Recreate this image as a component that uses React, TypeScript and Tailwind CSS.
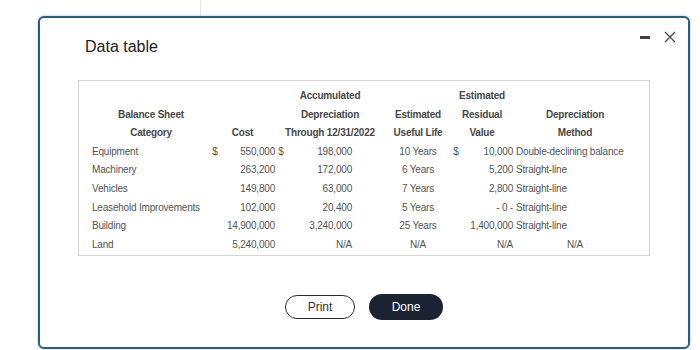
const rows = [
  { cat: "Equipment", costSign: "$", cost: "550,000", accSign: "$", acc: "198,000", life: "10 Years", resSign: "$", res: "10,000", method: "Double-declining balance" },
  { cat: "Machinery", cost: "263,200", acc: "172,000", life: "6 Years", res: "5,200", method: "Straight-line" },
  { cat: "Vehicles", cost: "149,800", acc: "63,000", life: "7 Years", res: "2,800", method: "Straight-line" },
  { cat: "Leasehold Improvements", cost: "102,000", acc: "20,400", life: "5 Years", res: "- 0 -", method: "Straight-line" },
  { cat: "Building", cost: "14,900,000", acc: "3,240,000", life: "25 Years", res: "1,400,000", method: "Straight-line" },
  { cat: "Land", cost: "5,240,000", acc: "N/A", life: "N/A", res: "N/A", method: "N/A", centerMethod: true },
]

export default function App() {
  return (
    <div className="h-[350px] w-[700px] overflow-hidden bg-white font-['Liberation_Sans',Arial,sans-serif]">
      <div className="ml-[200px] h-[16px] border-l border-[#e6e6e6]" />
      <div className="relative ml-[38px] flex h-[333px] w-[652px] flex-col rounded-[6px] border-2 border-[#2d5c7a] bg-white shadow-[0_0_3px_rgba(60,130,170,0.45)]">
        <div className="absolute right-[12px] top-[13px] flex items-center gap-[14px]">
          <div className="h-[3px] w-[10px] bg-[#404040]" />
          <svg width="12" height="12" viewBox="0 0 12 12">
            <path d="M1 1 L11 11 M11 1 L1 11" stroke="#4a4a4a" strokeWidth="1.3" />
          </svg>
        </div>

        <h1 className="ml-[45px] mt-[20px] text-[16px] leading-[18px] text-[#222]">Data table</h1>

        <div className="mx-[38px] mt-[24px] border border-[#d6d6d6] pb-[1px] pt-[6px]">
          <table className="w-[570px] table-fixed border-collapse text-[10px] leading-[18.6px] tracking-[-0.2px] text-[#555]">
            <colgroup>
              <col className="w-[131px]" />
              <col className="w-[10px]" />
              <col className="w-[55px]" />
              <col className="w-[12px]" />
              <col className="w-[98px]" />
              <col className="w-[66px]" />
              <col className="w-[10px]" />
              <col className="w-[52px]" />
              <col className="w-[136px]" />
            </colgroup>
            <thead className="font-bold text-[#484848]">
              <tr>
                <th />
                <th colSpan={2} />
                <th colSpan={2} className="text-center font-bold">Accumulated</th>
                <th />
                <th colSpan={2} className="text-center font-bold">Estimated</th>
                <th />
              </tr>
              <tr>
                <th className="pl-[13px] text-center font-bold">Balance Sheet</th>
                <th colSpan={2} />
                <th colSpan={2} className="text-center font-bold">Depreciation</th>
                <th className="text-center font-bold">Estimated</th>
                <th colSpan={2} className="text-center font-bold">Residual</th>
                <th className="pr-[12px] text-center font-bold">Depreciation</th>
              </tr>
              <tr>
                <th className="pl-[13px] text-center font-bold">Category</th>
                <th colSpan={2} className="text-center font-bold">Cost</th>
                <th colSpan={2} className="whitespace-nowrap text-center font-bold">Through 12/31/2022</th>
                <th className="text-center font-bold">Useful Life</th>
                <th colSpan={2} className="text-center font-bold">Value</th>
                <th className="pr-[12px] text-center font-bold">Method</th>
              </tr>
            </thead>
            <tbody>
              {rows.map((r) => (
                <tr key={r.cat}>
                  <td className="whitespace-nowrap pl-[13px] text-left">{r.cat}</td>
                  <td className="text-center">{r.costSign}</td>
                  <td className="whitespace-nowrap text-right">{r.cost}</td>
                  <td className="text-center">{r.accSign}</td>
                  <td className="whitespace-nowrap pr-[33px] text-right">{r.acc}</td>
                  <td className="text-center">{r.life}</td>
                  <td className="text-center">{r.resSign}</td>
                  <td className="whitespace-nowrap text-right">{r.res}</td>
                  <td
                    className={
                      r.centerMethod
                        ? "pr-[12px] text-center"
                        : "whitespace-nowrap pl-[3px] text-left"
                    }
                  >
                    {r.method}
                  </td>
                </tr>
              ))}
            </tbody>
          </table>
        </div>

        <div className="mt-[38px] flex items-center justify-center gap-[14px]">
          <button className="h-[24px] w-[70px] rounded-full border-[1.5px] border-[#2a2a2a] bg-white text-[12px] text-[#333]">
            Print
          </button>
          <button className="h-[26px] w-[74px] rounded-full bg-[#1b2232] text-[12px] text-white">
            Done
          </button>
        </div>
      </div>
    </div>
  )
}
